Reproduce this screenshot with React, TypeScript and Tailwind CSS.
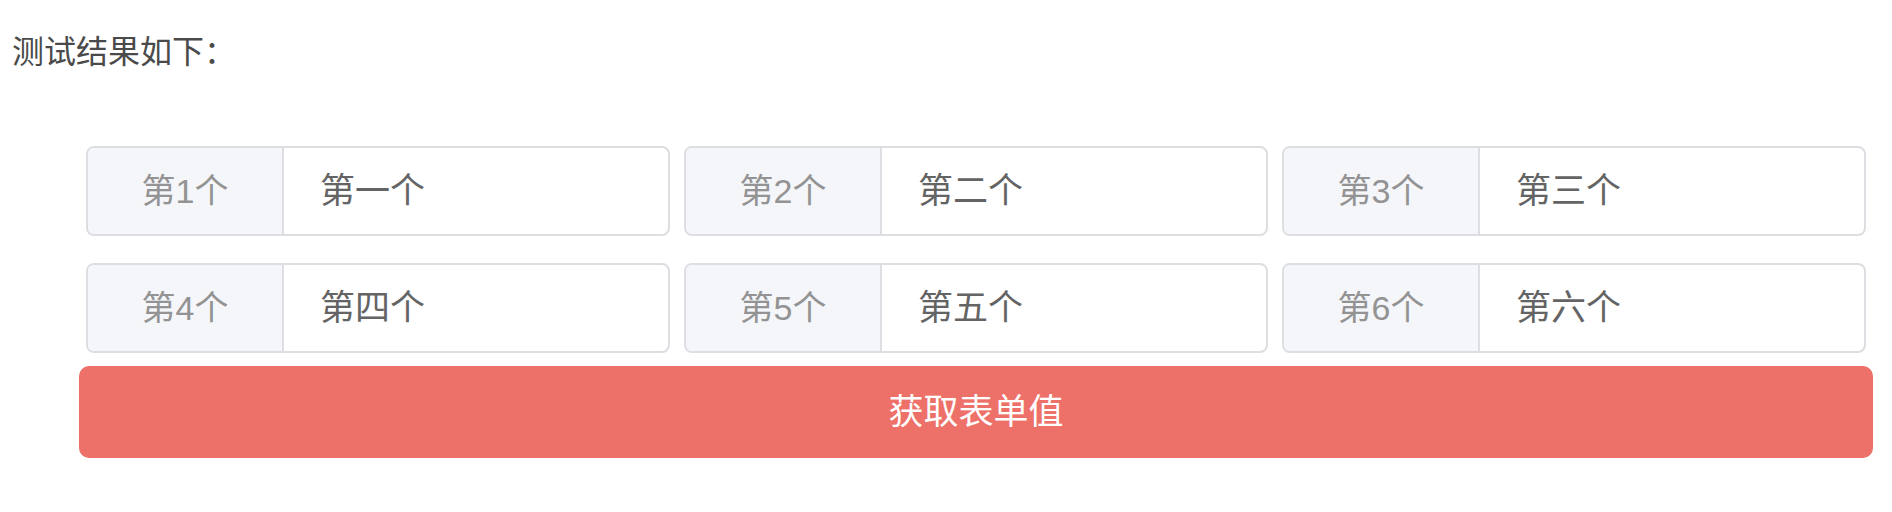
const items = [
  { label: '第1个', value: '第一个' },
  { label: '第2个', value: '第二个' },
  { label: '第3个', value: '第三个' },
  { label: '第4个', value: '第四个' },
  { label: '第5个', value: '第五个' },
  { label: '第6个', value: '第六个' },
];

const font = { fontFamily: '"Liberation Sans", "Noto Sans CJK SC", sans-serif' };

export default function App() {
  return (
    <div className="min-h-[512px] w-[1892px] bg-white" style={font}>
      {/* 标题 */}
      <p className="pl-3 pt-[36px] text-[32px] leading-[32px] text-[#4a4a4a]">测试结果如下：</p>

      <div className="ml-[79px] w-[1794px]">
        {/* 输入框 */}
        <div className="mt-[78px] grid grid-cols-3 gap-y-[27px]">
          {items.map((item) => (
            <div key={item.label} className="px-[7px]">
              <div className="flex h-[90px] overflow-hidden rounded-[8px] border-2 border-[#dcdee2] bg-white">
                <div className="flex w-[196px] shrink-0 items-center justify-center border-r-2 border-[#dcdee2] bg-[#f5f6fa] text-[34px] text-[#939393]">
                  {item.label}
                </div>
                <div className="flex flex-1 items-center pl-[36px] text-[35px] text-[#646464]">
                  {item.value}
                </div>
              </div>
            </div>
          ))}
        </div>

        {/* 按钮 */}
        <button className="mt-[13px] flex h-[92px] w-full items-center justify-center rounded-[10px] bg-[#ed7069] text-[35px] text-white">
          获取表单值
        </button>
      </div>
    </div>
  );
}
